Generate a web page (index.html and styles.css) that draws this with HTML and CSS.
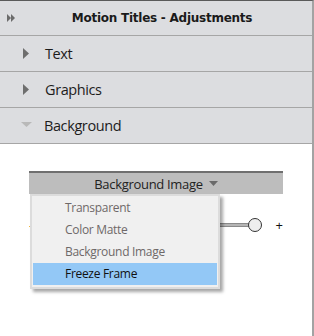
FILE: index.html
```html
<!DOCTYPE html>
<html>

<head>
    <meta charset="UTF-8">
    <title>Motion Titles - Adjustments</title>
    <link rel="stylesheet" href="styles.css">
</head>

<body>

    <div class="panel">

        <div class="head">
            <svg class="collapse" width="9" height="8" viewBox="0 0 9 8">
                <polygon points="0,0 4,4 0,8" fill="#6b6b6b" />
                <polygon points="4,0 8,4 4,8" fill="#6b6b6b" />
            </svg>
            <span class="title">Motion Titles - Adjustments</span>
        </div>

        <div class="row">
            <svg class="tri" width="7" height="11" viewBox="0 0 7 11">
                <polygon points="0,0 6,5.5 0,11" fill="#6e6e6e" />
            </svg>
            <span>Text</span>
        </div>

        <div class="row">
            <svg class="tri" width="7" height="11" viewBox="0 0 7 11">
                <polygon points="0,0 6,5.5 0,11" fill="#6e6e6e" />
            </svg>
            <span>Graphics</span>
        </div>

        <div class="row">
            <svg class="tri down" width="11" height="7" viewBox="0 0 11 7">
                <polygon points="0,0 11,0 5.5,5" fill="#b9b9b9" />
            </svg>
            <span>Background</span>
        </div>

        <div class="content">
            <div class="select">
                <div class="btn">
                    Background Image
                    <svg width="9" height="5" viewBox="0 0 9 5">
                        <polygon points="0,0 9,0 4.5,5" fill="#6a6a6a" />
                    </svg>
                </div>

                <ul class="menu">
                    <li class="off">Transparent</li>
                    <li class="off">Color Matte</li>
                    <li class="off">Background Image</li>
                    <li class="on">Freeze Frame</li>
                </ul>
            </div>

            <div class="slider">
                <span class="minus">–</span>
                <div class="track"></div>
                <div class="thumb"></div>
                <span class="plus">+</span>
            </div>
        </div>

    </div>

</body>

</html>
```

FILE: styles.css
```css
* {
    margin: 0;
    padding: 0;
    box-sizing: border-box;
}

body {
    width: 314px;
    height: 336px;
    background-color: #fff;
    font-family: "Open Sans", "Noto Sans", sans-serif;
    overflow: hidden;
}

.panel {
    height: 336px;
    border-right: 2px solid #a3a3a3;
    border-top: 1px solid #5a5a5a;
}

.head {
    display: flex;
    align-items: center;
    height: 35px;
    background-color: #dcdde0;
    border-bottom: 1px solid #a6a6a6;
    padding-left: 7px;
}

.title {
    flex: 1;
    text-align: center;
    font-family: "DejaVu Sans", sans-serif;
    font-weight: bold;
    font-size: 12px;
    letter-spacing: -0.25px;
    color: #1a1a1a;
    padding-right: 4px;
}

.row {
    display: flex;
    align-items: center;
    height: 36px;
    background-color: #dcdde0;
    border-bottom: 1px solid #a6a6a6;
    padding-left: 23px;
    font-size: 14.5px;
    letter-spacing: -0.4px;
    color: #1c1c1c;
}

.row:last-of-type {
    border-bottom: none;
}

.tri {
    margin-right: 15px;
}

.tri.down {
    margin-left: -2px;
    margin-right: 12px;
}

.content {
    padding: 27px 0 0 29px;
}

.select {
    position: relative;
    width: 254px;
}

.btn {
    display: flex;
    align-items: center;
    justify-content: center;
    gap: 6px;
    height: 23px;
    background-color: #bdbdbd;
    border-top: 2px solid #6f6f6f;
    font-size: 13px;
    letter-spacing: -0.3px;
    color: #222;
}

.menu {
    position: absolute;
    left: 1px;
    top: 23px;
    width: 190px;
    list-style: none;
    background-color: #f0f0f0;
    border: 2px solid #dcdcdc;
    padding: 1px 0 2px 1px;
    box-shadow: 3px 3px 3px rgba(0, 0, 0, 0.35);
    z-index: 2;
}

.menu li {
    height: 22px;
    line-height: 22px;
    padding-left: 32px;
    font-size: 12px;
    letter-spacing: -0.3px;
    margin-right: 1px;
}

.menu .off {
    color: #6e6868;
}

.menu .on {
    background-color: #93c8f6;
    color: #111;
}

.slider {
    display: flex;
    align-items: center;
    width: 254px;
    height: 16px;
    margin-top: 23px;
}

.minus {
    font-size: 12px;
    color: #c5780e;
    width: 6px;
    overflow: hidden;
}

.track {
    flex: 1;
    height: 4px;
    margin-left: 180px;
    background-color: #b5b5b5;
    border-top: 1px solid #8a8a8a;
    border-bottom: 1px solid #8a8a8a;
}

.thumb {
    width: 14px;
    height: 14px;
    border: 1.5px solid #333;
    border-radius: 50%;
    background-color: #eee;
    margin-left: -1px;
}

.plus {
    width: 21px;
    text-align: right;
    font-size: 13px;
    color: #111;
}
```
